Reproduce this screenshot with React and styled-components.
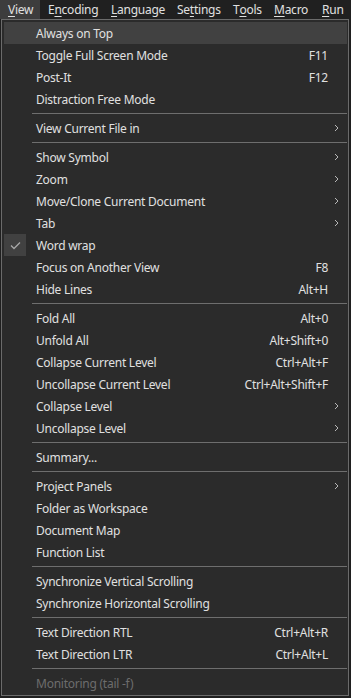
import React from "react";
import styled, { createGlobalStyle } from "styled-components";

const GlobalStyle = createGlobalStyle`
  body {
    margin: 0;
    background: #1f1f1f;
    font-family: "Noto Sans", "Open Sans", sans-serif;
    font-size: 12px;
    letter-spacing: -0.25px;
    color: #e0e0e0;
  }
`;

const bar = [
  { label: "View", key: 0, width: 40, active: true },
  { label: "Encoding", key: 1, width: 63 },
  { label: "Language", key: 0, width: 66 },
  { label: "Settings", key: 2, width: 56 },
  { label: "Tools", key: 1, width: 41 },
  { label: "Macro", key: 0, width: 48 },
  { label: "Run", key: 0, width: 29 },
];

const groups = [
  [
    { label: "Always on Top", hover: true },
    { label: "Toggle Full Screen Mode", shortcut: "F11" },
    { label: "Post-It", shortcut: "F12" },
    { label: "Distraction Free Mode" },
  ],
  [{ label: "View Current File in", sub: true }],
  [
    { label: "Show Symbol", sub: true },
    { label: "Zoom", sub: true },
    { label: "Move/Clone Current Document", sub: true },
    { label: "Tab", sub: true },
    { label: "Word wrap", checked: true },
    { label: "Focus on Another View", shortcut: "F8" },
    { label: "Hide Lines", shortcut: "Alt+H" },
  ],
  [
    { label: "Fold All", shortcut: "Alt+0" },
    { label: "Unfold All", shortcut: "Alt+Shift+0" },
    { label: "Collapse Current Level", shortcut: "Ctrl+Alt+F" },
    { label: "Uncollapse Current Level", shortcut: "Ctrl+Alt+Shift+F" },
    { label: "Collapse Level", sub: true },
    { label: "Uncollapse Level", sub: true },
  ],
  [{ label: "Summary..." }],
  [
    { label: "Project Panels", sub: true },
    { label: "Folder as Workspace" },
    { label: "Document Map" },
    { label: "Function List" },
  ],
  [
    { label: "Synchronize Vertical Scrolling" },
    { label: "Synchronize Horizontal Scrolling" },
  ],
  [
    { label: "Text Direction RTL", shortcut: "Ctrl+Alt+R" },
    { label: "Text Direction LTR", shortcut: "Ctrl+Alt+L" },
  ],
  [{ label: "Monitoring (tail -f)", disabled: true }],
];

const App = () => {
  return (
    <>
      <GlobalStyle />
      <MenuBar>
        {bar.map((b) => (
          <BarItem key={b.label} active={b.active} width={b.width}>
            {b.label.slice(0, b.key)}
            <u>{b.label[b.key]}</u>
            {b.label.slice(b.key + 1)}
          </BarItem>
        ))}
      </MenuBar>
      <Menu>
        {groups.map((group, gi) => (
          <React.Fragment key={gi}>
            {gi > 0 && <Separator />}
            {group.map((item) => (
              <Item key={item.label} hover={item.hover} disabled={item.disabled}>
                <CheckCell>
                  {item.checked && (
                    <CheckBox>
                      <svg width="11" height="9" viewBox="0 0 11 9">
                        <polyline
                          points="1,4.5 4,7.5 10,1.5"
                          fill="none"
                          stroke="#a8a8a8"
                          strokeWidth="1.3"
                        />
                      </svg>
                    </CheckBox>
                  )}
                </CheckCell>
                <Label>{item.label}</Label>
                <Shortcut>{item.shortcut}</Shortcut>
                <ArrowCell>
                  {item.sub && (
                    <svg width="5" height="8" viewBox="0 0 5 8">
                      <polyline
                        points="1,1 4,4 1,7"
                        fill="none"
                        stroke="#b8b8b8"
                        strokeWidth="1"
                      />
                    </svg>
                  )}
                </ArrowCell>
              </Item>
            ))}
          </React.Fragment>
        ))}
      </Menu>
    </>
  );
};

export default App;

const MenuBar = styled.div`
  display: flex;
  height: 19px;
  background: #202020;
  overflow: hidden;
`;

const BarItem = styled.div`
  display: flex;
  align-items: center;
  flex: none;
  box-sizing: border-box;
  width: ${(props) => props.width}px;
  padding-left: 8px;
  background: ${(props) => (props.active ? "#3d3d3d" : "transparent")};
  color: #e0e0e0;
  white-space: nowrap;
  u {
    text-underline-offset: 2px;
  }
`;

const Menu = styled.div`
  margin-left: 1px;
  width: 348px;
  box-sizing: border-box;
  border: 1px solid #6b6b6b;
  background: #2b2b2b;
  padding: 2px 1px 1px 2px;
`;

const Item = styled.div`
  display: grid;
  grid-template-columns: 32px 1fr auto 19px;
  align-items: center;
  height: 22px;
  background: ${(props) => (props.hover ? "#414141" : "transparent")};
  color: ${(props) => (props.disabled ? "#6d6d6d" : "#e0e0e0")};
  white-space: nowrap;
`;

const CheckCell = styled.div`
  height: 22px;
`;

const CheckBox = styled.div`
  width: 22px;
  height: 22px;
  background: #414141;
  display: flex;
  align-items: center;
  justify-content: center;
`;

const Label = styled.span``;

const Shortcut = styled.span``;

const ArrowCell = styled.div`
  display: flex;
  align-items: center;
  padding-left: 6px;
`;

const Separator = styled.div`
  height: 7px;
  box-sizing: border-box;
  padding-top: 3px;
  margin-left: 28px;
  &::before {
    content: "";
    display: block;
    height: 1px;
    background: #6e6e6e;
  }
`;
